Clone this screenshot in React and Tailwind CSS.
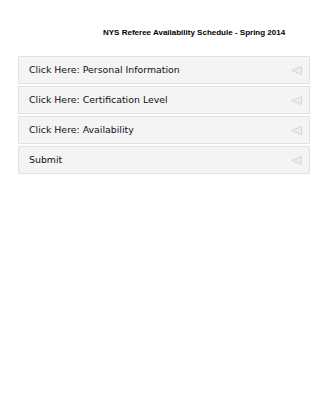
export default function App() {
  const rows = [
    "Click Here: Personal Information",
    "Click Here: Certification Level",
    "Click Here: Availability",
    "Submit",
  ];
  return (
    <div className="w-[325px] h-[400px] bg-white">
      <div className="pt-[28px] pl-[103px] h-[56px]">
        <div className="font-['Liberation_Sans',Arial,sans-serif] font-bold text-[8px] leading-[9px] text-black">
          NYS Referee Availability Schedule - Spring 2014
        </div>
      </div>
      <div className="mx-[18px] w-[292px] flex flex-col gap-[2px]">
        {rows.map((r) => (
          <div
            key={r}
            className="h-[28px] flex items-center justify-between bg-[#f4f4f4] border border-[#e2e2e2] pl-[10px] pr-[7px]"
          >
            <span className="font-['DejaVu_Sans',Verdana,sans-serif] text-[9.4px] text-[#111]">{r}</span>
            <svg width="11" height="9" viewBox="0 0 11 9">
              <polygon points="10.5,0.5 10.5,8.5 0.5,4.5" fill="#ececec" stroke="#d6d6d6" strokeWidth="1" />
            </svg>
          </div>
        ))}
      </div>
    </div>
  );
}
